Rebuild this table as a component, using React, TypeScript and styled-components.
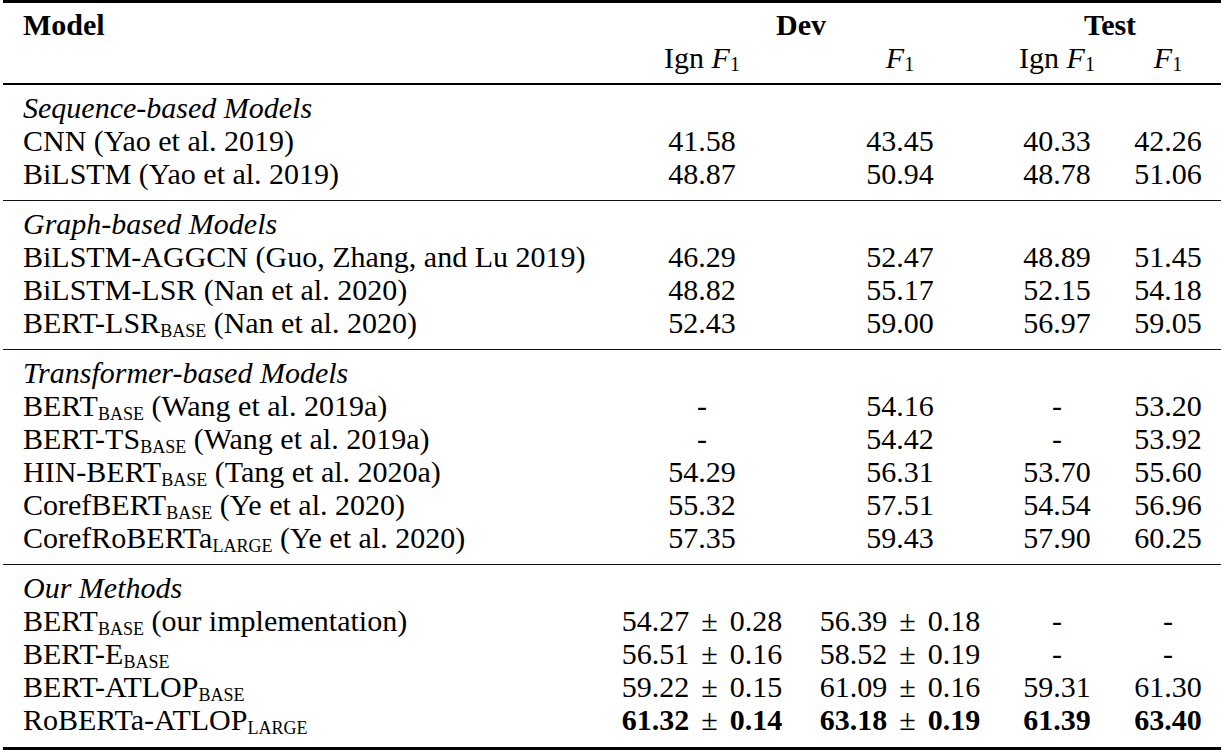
import { FC, ReactNode } from 'react';
import styled, { createGlobalStyle } from 'styled-components';

type Name = { base: string; sub?: string; rest?: string };
type Entry = { name: Name; values: string[]; bold?: boolean };
type Group = { title: string; rows: Entry[] };

const groups: Group[] = [
    {
        title: 'Sequence-based Models',
        rows: [
            { name: { base: 'CNN (Yao et al. 2019)' }, values: ['41.58', '43.45', '40.33', '42.26'] },
            { name: { base: 'BiLSTM (Yao et al. 2019)' }, values: ['48.87', '50.94', '48.78', '51.06'] },
        ],
    },
    {
        title: 'Graph-based Models',
        rows: [
            {
                name: { base: 'BiLSTM-AGGCN (Guo, Zhang, and Lu 2019)' },
                values: ['46.29', '52.47', '48.89', '51.45'],
            },
            { name: { base: 'BiLSTM-LSR (Nan et al. 2020)' }, values: ['48.82', '55.17', '52.15', '54.18'] },
            {
                name: { base: 'BERT-LSR', sub: 'BASE', rest: ' (Nan et al. 2020)' },
                values: ['52.43', '59.00', '56.97', '59.05'],
            },
        ],
    },
    {
        title: 'Transformer-based Models',
        rows: [
            { name: { base: 'BERT', sub: 'BASE', rest: ' (Wang et al. 2019a)' }, values: ['-', '54.16', '-', '53.20'] },
            {
                name: { base: 'BERT-TS', sub: 'BASE', rest: ' (Wang et al. 2019a)' },
                values: ['-', '54.42', '-', '53.92'],
            },
            {
                name: { base: 'HIN-BERT', sub: 'BASE', rest: ' (Tang et al. 2020a)' },
                values: ['54.29', '56.31', '53.70', '55.60'],
            },
            {
                name: { base: 'CorefBERT', sub: 'BASE', rest: ' (Ye et al. 2020)' },
                values: ['55.32', '57.51', '54.54', '56.96'],
            },
            {
                name: { base: 'CorefRoBERTa', sub: 'LARGE', rest: ' (Ye et al. 2020)' },
                values: ['57.35', '59.43', '57.90', '60.25'],
            },
        ],
    },
    {
        title: 'Our Methods',
        rows: [
            {
                name: { base: 'BERT', sub: 'BASE', rest: ' (our implementation)' },
                values: ['54.27 ± 0.28', '56.39 ± 0.18', '-', '-'],
            },
            { name: { base: 'BERT-E', sub: 'BASE' }, values: ['56.51 ± 0.16', '58.52 ± 0.19', '-', '-'] },
            {
                name: { base: 'BERT-ATLOP', sub: 'BASE' },
                values: ['59.22 ± 0.15', '61.09 ± 0.16', '59.31', '61.30'],
            },
            {
                name: { base: 'RoBERTa-ATLOP', sub: 'LARGE' },
                values: ['61.32 ± 0.14', '63.18 ± 0.19', '61.39', '63.40'],
                bold: true,
            },
        ],
    },
];

const Value: FC<{ text: string }> = ({ text }) => {
    if (!text.includes('±')) return <>{text}</>;
    const [mean, err] = text.split(' ± ');
    return (
        <>
            {mean}
            <Pm>±</Pm>
            {err}
        </>
    );
};

const F1: FC = () => (
    <>
        <MathF>F</MathF>
        <MathSub>1</MathSub>
    </>
);

const ModelName: FC<{ name: Name }> = ({ name }) => (
    <>
        {name.base}
        {name.sub && <TextSub>{name.sub}</TextSub>}
        {name.rest}
    </>
);

const HeaderCell: FC<{ children: ReactNode; span?: number }> = ({ children, span }) => (
    <GroupCell $span={span ?? 1}>{children}</GroupCell>
);

export default function App() {
    return (
        <>
            <GlobalStyle />
            <Page>
                <Table>
                    <Header>
                        <Row>
                            <NameCell $bold>Model</NameCell>
                            <HeaderCell span={2}>Dev</HeaderCell>
                            <HeaderCell span={2}>Test</HeaderCell>
                        </Row>
                        <Row>
                            <NameCell />
                            <NumCell>
                                Ign <F1 />
                            </NumCell>
                            <NumCell>
                                <F1 />
                            </NumCell>
                            <NumCell>
                                Ign <F1 />
                            </NumCell>
                            <NumCell>
                                <F1 />
                            </NumCell>
                        </Row>
                    </Header>
                    {groups.map((g, i) => (
                        <Section key={g.title} $first={i === 0} $last={i === groups.length - 1}>
                            <Row>
                                <NameCell $italic>{g.title}</NameCell>
                            </Row>
                            {g.rows.map((r) => (
                                <Row key={r.name.base + (r.name.rest ?? '')}>
                                    <NameCell>
                                        <ModelName name={r.name} />
                                    </NameCell>
                                    {r.values.map((v, j) => (
                                        <NumCell key={j} $bold={r.bold}>
                                            <Value text={v} />
                                        </NumCell>
                                    ))}
                                </Row>
                            ))}
                        </Section>
                    ))}
                </Table>
            </Page>
        </>
    );
}

const GlobalStyle = createGlobalStyle`
    html, body {
        margin: 0;
        padding: 0;
        background: #fff;
    }
    body {
        font-family: 'Liberation Serif', 'Times New Roman', serif;
        color: #000;
    }
`;

const Page = styled.div`
    width: 1225px;
    padding-left: 3px;
    box-sizing: border-box;
`;

const Table = styled.div`
    width: 1218px;
    border-top: 3px solid #000;
    border-bottom: 3px solid #000;
`;

const Header = styled.div`
    padding: 5px 0 9px;
    border-bottom: 2px solid #000;
`;

const Section = styled.div<{ $first?: boolean; $last?: boolean }>`
    padding: 6px 0 ${(p) => (p.$last ? '11px' : '10px')};
    border-top: ${(p) => (p.$first ? 'none' : '1px solid #111')};
`;

const Row = styled.div`
    display: grid;
    grid-template-columns: 600px 198px 198px 116px 106px;
    height: 33px;
    font-size: 30px;
    line-height: 33px;
    white-space: nowrap;
`;

const NameCell = styled.div<{ $bold?: boolean; $italic?: boolean }>`
    padding-left: 20px;
    font-weight: ${(p) => (p.$bold ? 700 : 400)};
    font-style: ${(p) => (p.$italic ? 'italic' : 'normal')};
`;

const NumCell = styled.div<{ $bold?: boolean }>`
    text-align: center;
    font-weight: ${(p) => (p.$bold ? 700 : 400)};
`;

const GroupCell = styled.div<{ $span: number }>`
    grid-column: span ${(p) => p.$span};
    text-align: center;
    font-weight: 700;
`;

const Pm = styled.span`
    font-weight: 400;
    margin: 0 12px;
`;

const MathF = styled.i`
    font-style: italic;
`;

const MathSub = styled.span`
    font-size: 20px;
    vertical-align: -3px;
    line-height: 0;
`;

const TextSub = styled.span`
    font-size: 18px;
    vertical-align: -4px;
    line-height: 0;
`;
